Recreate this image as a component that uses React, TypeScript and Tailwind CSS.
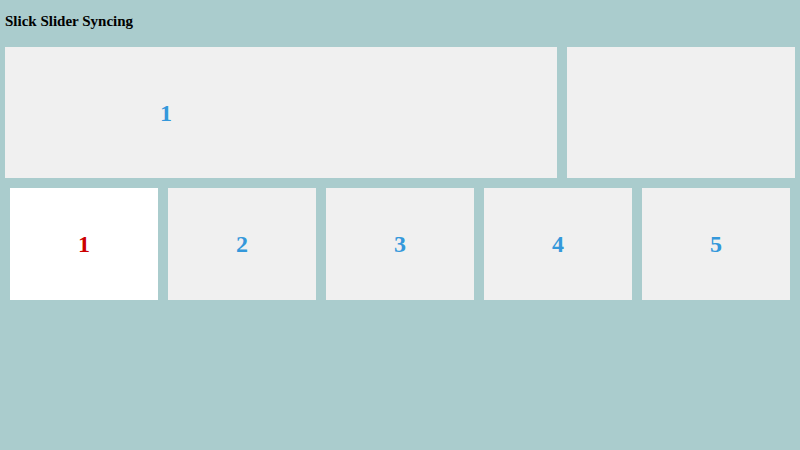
import React from 'react';

const thumbs = [1, 2, 3, 4, 5];

export default function App() {
  const active = 1;

  return (
    <div
      className="w-[800px] h-[450px] bg-[#aacccd] pt-[12px] px-[5px]"
      style={{ fontFamily: '"Liberation Serif", serif' }}
    >
      <h3 className="text-[15px] leading-[18px] font-bold text-black mb-[17px]">
        Slick Slider Syncing
      </h3>

      {/* Main slider */}
      <div className="flex gap-[10px] h-[131px]">
        <div className="w-[552px] bg-[#f0f0f0] flex items-center">
          <div className="w-[322px] text-center text-[24px] font-bold text-[#3498db]">1</div>
        </div>
        <div className="flex-1 bg-[#f0f0f0]" />
      </div>

      {/* Nav slider */}
      <div className="mt-[10px] px-[5px] flex gap-[10px] h-[112px]">
        {thumbs.map((n) => (
          <div
            key={n}
            className={`w-[148px] flex items-center justify-center text-[24px] font-bold ${
              n === active ? 'bg-white text-[#cc0000]' : 'bg-[#f0f0f0] text-[#3498db]'
            }`}
          >
            {n}
          </div>
        ))}
      </div>
    </div>
  );
}
